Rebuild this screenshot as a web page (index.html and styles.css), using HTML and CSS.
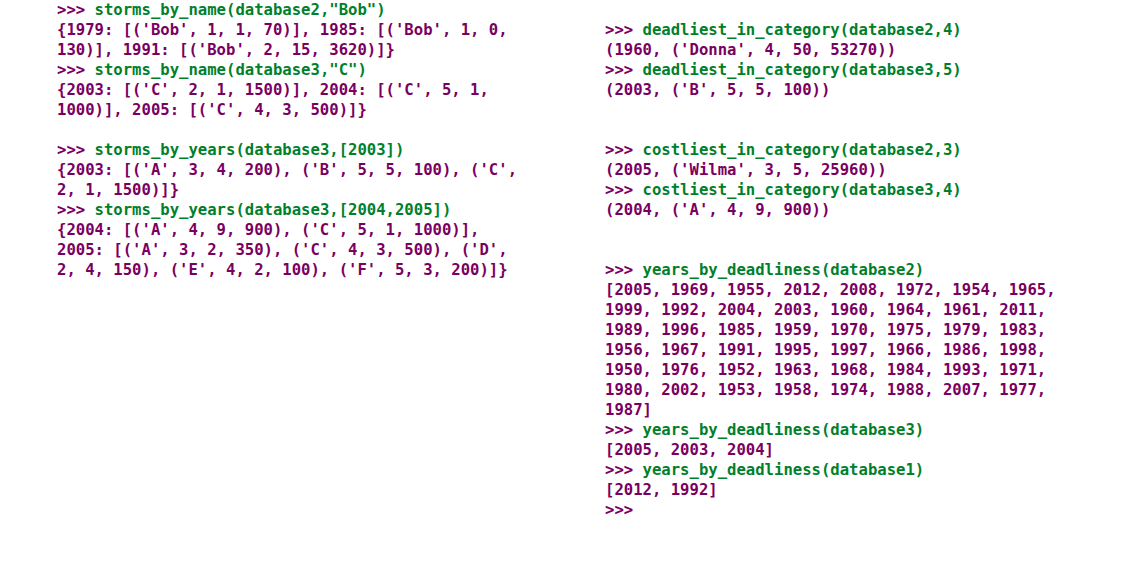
FILE: index.html
```html
<!DOCTYPE html>
<html>
<head>
<meta charset="utf-8">
<link rel="stylesheet" href="styles.css">
</head>
<body>
<div class="shell">
<pre class="col col-left"><span class="p">&gt;&gt;&gt;</span> <span class="c">storms_by_name(database2,"Bob")</span>
{1979: [('Bob', 1, 1, 70)], 1985: [('Bob', 1, 0,
130)], 1991: [('Bob', 2, 15, 3620)]}
<span class="p">&gt;&gt;&gt;</span> <span class="c">storms_by_name(database3,"C")</span>
{2003: [('C', 2, 1, 1500)], 2004: [('C', 5, 1,
1000)], 2005: [('C', 4, 3, 500)]}

<span class="p">&gt;&gt;&gt;</span> <span class="c">storms_by_years(database3,[2003])</span>
{2003: [('A', 3, 4, 200), ('B', 5, 5, 100), ('C',
2, 1, 1500)]}
<span class="p">&gt;&gt;&gt;</span> <span class="c">storms_by_years(database3,[2004,2005])</span>
{2004: [('A', 4, 9, 900), ('C', 5, 1, 1000)],
2005: [('A', 3, 2, 350), ('C', 4, 3, 500), ('D',
2, 4, 150), ('E', 4, 2, 100), ('F', 5, 3, 200)]}</pre>
<pre class="col col-right">

<span class="p">&gt;&gt;&gt;</span> <span class="c">deadliest_in_category(database2,4)</span>
(1960, ('Donna', 4, 50, 53270))
<span class="p">&gt;&gt;&gt;</span> <span class="c">deadliest_in_category(database3,5)</span>
(2003, ('B', 5, 5, 100))


<span class="p">&gt;&gt;&gt;</span> <span class="c">costliest_in_category(database2,3)</span>
(2005, ('Wilma', 3, 5, 25960))
<span class="p">&gt;&gt;&gt;</span> <span class="c">costliest_in_category(database3,4)</span>
(2004, ('A', 4, 9, 900))


<span class="p">&gt;&gt;&gt;</span> <span class="c">years_by_deadliness(database2)</span>
[2005, 1969, 1955, 2012, 2008, 1972, 1954, 1965,
1999, 1992, 2004, 2003, 1960, 1964, 1961, 2011,
1989, 1996, 1985, 1959, 1970, 1975, 1979, 1983,
1956, 1967, 1991, 1995, 1997, 1966, 1986, 1998,
1950, 1976, 1952, 1963, 1968, 1984, 1993, 1971,
1980, 2002, 1953, 1958, 1974, 1988, 2007, 1977,
1987]
<span class="p">&gt;&gt;&gt;</span> <span class="c">years_by_deadliness(database3)</span>
[2005, 2003, 2004]
<span class="p">&gt;&gt;&gt;</span> <span class="c">years_by_deadliness(database1)</span>
[2012, 1992]
<span class="p">&gt;&gt;&gt;</span></pre>
</div>
</body>
</html>
```
FILE: styles.css
```css
html, body {
  margin: 0;
  padding: 0;
  background: #ffffff;
}
.shell {
  display: grid;
  grid-template-columns: 548px 1fr;
  padding-left: 57px;
  padding-top: 0;
}
.col {
  margin: 0;
  font-family: "DejaVu Sans Mono", "Liberation Mono", monospace;
  font-weight: bold;
  font-size: 15.6px;
  line-height: 20px;
  color: #7a005f;
  white-space: pre;
}
.p {
  color: #7a005f;
}
.c {
  color: #00802b;
}
```
